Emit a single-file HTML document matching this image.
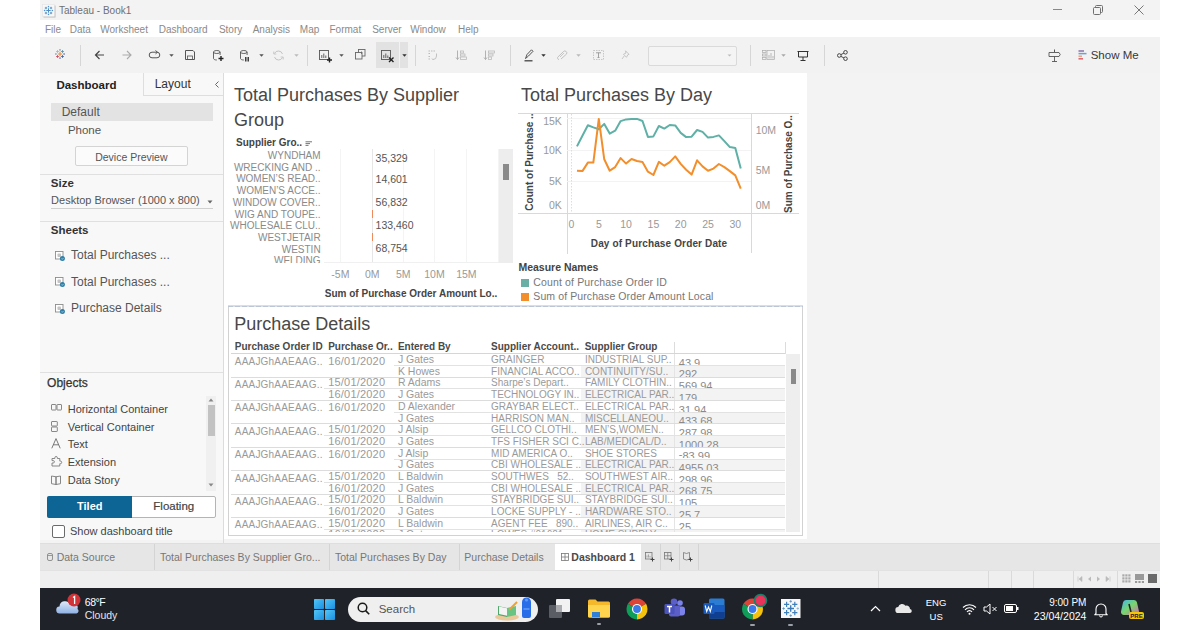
<!DOCTYPE html>
<html><head><meta charset="utf-8"><title>Tableau - Book1</title>
<style>
html,body{margin:0;padding:0;width:1200px;height:630px;overflow:hidden;background:#fff;}
body{position:relative;font-family:"Liberation Sans",sans-serif;}
.t{position:absolute;line-height:1;white-space:nowrap;}
.r{position:absolute;box-sizing:border-box;}
svg.r{overflow:visible;}
</style></head><body>
<div class="r" style="left:40px;top:0px;width:1120px;height:630px;background:#f3f3f3;"></div>
<div class="r" style="left:40px;top:0px;width:1120px;height:20px;background:#f3f3f3;"></div>
<svg class="r" style="left:42px;top:4px;" width="14" height="14" viewBox="0 0 14 14"><rect x="1.5" y="1.5" width="12" height="12" fill="#9a9a9a" opacity="0.6"/><rect x="0.5" y="0.5" width="12" height="12" fill="#f7f7f7" stroke="#e0e0e0" stroke-width="0.5"/><path d="M4.3 6.5h4.4M6.5 4.3v4.4" stroke="#4a8cc4" stroke-width="1"/><path d="M2.8 4h2.4M4 2.8v2.4" stroke="#4a8cc4" stroke-width="0.9"/><path d="M7.8 4h2.4M9 2.8v2.4" stroke="#4a8cc4" stroke-width="0.9"/><path d="M2.8 9h2.4M4 7.8v2.4" stroke="#4a8cc4" stroke-width="0.9"/><path d="M7.8 9h2.4M9 7.8v2.4" stroke="#4a8cc4" stroke-width="0.9"/><path d="M5.8 2.6h1.4M6.5 1.9000000000000001v1.4" stroke="#4a8cc4" stroke-width="0.8"/><path d="M5.8 10.4h1.4M6.5 9.700000000000001v1.4" stroke="#4a8cc4" stroke-width="0.8"/><path d="M1.9000000000000001 6.5h1.4M2.6 5.8v1.4" stroke="#4a8cc4" stroke-width="0.8"/><path d="M9.700000000000001 6.5h1.4M10.4 5.8v1.4" stroke="#4a8cc4" stroke-width="0.8"/></svg>
<div class="t" style="top:6.00px;font-size:10px;color:#707070;left:59.00px;">Tableau - Book1</div>
<div class="r" style="left:1052.5px;top:9px;width:9px;height:1px;background:#888;"></div>
<svg class="r" style="left:1092px;top:4px;" width="12" height="12" viewBox="0 0 12 12"><rect x="1.5" y="3.5" width="7" height="7" rx="1" fill="none" stroke="#707070"/><path d="M3.5 3.5V2.5a1 1 0 0 1 1-1h5a1 1 0 0 1 1 1v5a1 1 0 0 1-1 1h-1" fill="none" stroke="#707070"/></svg>
<svg class="r" style="left:1134px;top:5px;" width="10" height="10" viewBox="0 0 10 10"><path d="M0.5 0.5L9.5 9.5M9.5 0.5L0.5 9.5" stroke="#6a6a6a" stroke-width="0.9"/></svg>
<div class="r" style="left:40px;top:20px;width:1120px;height:17px;background:#ffffff;"></div>
<div class="t" style="top:25.00px;font-size:10px;color:#8a8a8a;left:45.00px;">File</div>
<div class="t" style="top:25.00px;font-size:10px;color:#8a8a8a;left:69.70px;">Data</div>
<div class="t" style="top:25.00px;font-size:10px;color:#8a8a8a;left:100.30px;">Worksheet</div>
<div class="t" style="top:25.00px;font-size:10px;color:#8a8a8a;left:158.70px;">Dashboard</div>
<div class="t" style="top:25.00px;font-size:10px;color:#8a8a8a;left:218.90px;">Story</div>
<div class="t" style="top:25.00px;font-size:10px;color:#8a8a8a;left:252.70px;">Analysis</div>
<div class="t" style="top:25.00px;font-size:10px;color:#8a8a8a;left:299.80px;">Map</div>
<div class="t" style="top:25.00px;font-size:10px;color:#8a8a8a;left:329.50px;">Format</div>
<div class="t" style="top:25.00px;font-size:10px;color:#8a8a8a;left:372.20px;">Server</div>
<div class="t" style="top:25.00px;font-size:10px;color:#8a8a8a;left:410.20px;">Window</div>
<div class="t" style="top:25.00px;font-size:10px;color:#8a8a8a;left:458.00px;">Help</div>
<div class="r" style="left:40px;top:37px;width:1120px;height:36px;background:#f2f2f2;"></div>
<svg class="r" style="left:55.1px;top:49.4px;" width="10" height="10" viewBox="0 0 10 10"><path d="M2.7 5h4.6M5 2.7v4.6" stroke="#ec8f3e" stroke-width="1.1"/><path d="M1.1 2.5h2.8M2.5 1.1v2.8" stroke="#f0a64a" stroke-width="0.9"/><path d="M6.1 2.5h2.8M7.5 1.1v2.8" stroke="#5e91a8" stroke-width="0.9"/><path d="M1.1 7.5h2.8M2.5 6.1v2.8" stroke="#d44a62" stroke-width="0.9"/><path d="M6.1 7.5h2.8M7.5 6.1v2.8" stroke="#3f67a6" stroke-width="0.9"/><path d="M4.2 0.9h1.6M5 0.09999999999999998v1.6" stroke="#7a9cb8" stroke-width="0.8"/><path d="M4.2 9.1h1.6M5 8.299999999999999v1.6" stroke="#6b7fb3" stroke-width="0.8"/><path d="M0.09999999999999998 5h1.6M0.9 4.2v1.6" stroke="#7aa0b5" stroke-width="0.8"/><path d="M8.299999999999999 5h1.6M9.1 4.2v1.6" stroke="#6d78b0" stroke-width="0.8"/></svg>
<div class="r" style="left:80px;top:45px;width:1px;height:21px;background:#d6d6d6;"></div>
<svg class="r" style="left:94px;top:50px;" width="11" height="10" viewBox="0 0 11 10"><path d="M10 5H1.5M5.5 1L1.5 5L5.5 9" fill="none" stroke="#444" stroke-width="1.2"/></svg>
<svg class="r" style="left:122px;top:50px;" width="11" height="10" viewBox="0 0 11 10"><path d="M0.5 5H9M5 1L9 5L5 9" fill="none" stroke="#aaa" stroke-width="1.1"/></svg>
<svg class="r" style="left:148px;top:50px;" width="13" height="9" viewBox="0 0 13 9"><path d="M4 2.2H9a2.8 2.8 0 0 1 0 5.6H4a2.8 2.8 0 0 1 0-5.6" fill="none" stroke="#555" stroke-width="1"/><path d="M7.5 0.5l2 1.7l-2 1.7" fill="none" stroke="#555" stroke-width="1"/></svg>
<svg class="r" style="left:169.0px;top:54px;" width="5" height="3" viewBox="0 0 5 3"><path d="M0.3 0.3h4.4l-2.2 2.5z" fill="#555"/></svg>
<svg class="r" style="left:185px;top:50px;" width="10" height="10" viewBox="0 0 10 10"><path d="M0.5 0.5h7.5l1.5 1.5v7.5h-9z" fill="none" stroke="#555"/><rect x="2.5" y="6" width="5" height="3.5" fill="none" stroke="#555" stroke-width="0.8"/></svg>
<svg class="r" style="left:213px;top:50px;" width="11" height="12" viewBox="0 0 11 12"><ellipse cx="3.8" cy="2" rx="3.3" ry="1.5" fill="none" stroke="#555" stroke-width="0.9"/><path d="M0.5 2v6.5c0 0.8 1.5 1.5 3.3 1.5M7.1 2v3" fill="none" stroke="#555" stroke-width="0.9"/><path d="M5.5 8.5h5M8 6v5" stroke="#222" stroke-width="1.4"/></svg>
<svg class="r" style="left:240px;top:50px;" width="10" height="12" viewBox="0 0 10 12"><ellipse cx="3.8" cy="2" rx="3.3" ry="1.5" fill="none" stroke="#555" stroke-width="0.9"/><path d="M0.5 2v6.5c0 0.8 1.5 1.5 3.3 1.5M7.1 2v3" fill="none" stroke="#555" stroke-width="0.9"/><path d="M5.8 7v4.5M8.2 7v4.5" stroke="#222" stroke-width="1.3"/></svg>
<svg class="r" style="left:259.2px;top:54px;" width="5" height="3" viewBox="0 0 5 3"><path d="M0.3 0.3h4.4l-2.2 2.5z" fill="#555"/></svg>
<svg class="r" style="left:273px;top:49.5px;" width="11" height="11" viewBox="0 0 11 11"><path d="M9.5 4A4.3 4.3 0 0 0 1.5 3.5M1.5 7A4.3 4.3 0 0 0 9.5 7.5" fill="none" stroke="#c4c4c4" stroke-width="1"/><path d="M0.8 1.5v2.5h2.5M10.2 9.5V7H7.7" fill="none" stroke="#c4c4c4" stroke-width="0.9"/></svg>
<svg class="r" style="left:293.8px;top:54px;" width="5" height="3" viewBox="0 0 5 3"><path d="M0.3 0.3h4.4l-2.2 2.5z" fill="#bbb"/></svg>
<div class="r" style="left:306.5px;top:45px;width:1px;height:21px;background:#d6d6d6;"></div>
<svg class="r" style="left:319px;top:49.5px;" width="14" height="13" viewBox="0 0 14 13"><rect x="0.5" y="0.5" width="9" height="9" fill="none" stroke="#555" stroke-width="0.9"/><path d="M2.8 8V5M4.8 8V3.5M6.8 8V5.5" stroke="#555" stroke-width="0.9"/><path d="M8 10h5M10.5 7.5v5" stroke="#222" stroke-width="1.4"/></svg>
<svg class="r" style="left:339.2px;top:54px;" width="5" height="3" viewBox="0 0 5 3"><path d="M0.3 0.3h4.4l-2.2 2.5z" fill="#555"/></svg>
<svg class="r" style="left:355px;top:49px;" width="11" height="11" viewBox="0 0 11 11"><rect x="3.5" y="0.5" width="6.5" height="6.5" fill="#f2f2f2" stroke="#666" stroke-width="0.9"/><rect x="0.5" y="3.5" width="6.5" height="6.5" fill="#f2f2f2" stroke="#666" stroke-width="0.9"/><path d="M6.5 5V2.5" stroke="#666" stroke-width="0.8"/></svg>
<div class="r" style="left:375.5px;top:42px;width:23px;height:26px;background:#e2e2e2;"></div>
<div class="r" style="left:400px;top:42px;width:8px;height:26px;background:#e2e2e2;"></div>
<svg class="r" style="left:381px;top:49.5px;" width="14" height="13" viewBox="0 0 14 13"><rect x="0.5" y="0.5" width="9" height="9" fill="none" stroke="#555" stroke-width="0.9"/><path d="M2.8 8V5M4.8 8V3.5M6.8 8V5.5" stroke="#555" stroke-width="0.9"/><path d="M8 7.5l4.5 4.5M12.5 7.5L8 12" stroke="#222" stroke-width="1.4"/></svg>
<svg class="r" style="left:401.7px;top:54px;" width="5" height="3" viewBox="0 0 5 3"><path d="M0.3 0.3h4.4l-2.2 2.5z" fill="#333"/></svg>
<div class="r" style="left:414.5px;top:45px;width:1px;height:21px;background:#d6d6d6;"></div>
<svg class="r" style="left:428px;top:50px;" width="10" height="11" viewBox="0 0 10 11"><path d="M0.5 1h1.5M3 1h1.5M5.5 1h1.5M0.5 3.5h1.5M0.5 6.5h1.5M0.5 9h1.5" stroke="#bbb" stroke-width="1"/><path d="M8.5 3.5v2.5a3.5 3.5 0 0 1-3.5 3.5M4 8.5l1.2 1.5" fill="none" stroke="#bbb" stroke-width="0.9"/></svg>
<svg class="r" style="left:456px;top:50px;" width="11" height="11" viewBox="0 0 11 11"><path d="M1.5 0.5v9M0 7.5l1.5 2l1.5-2" fill="none" stroke="#aaa" stroke-width="0.9"/><rect x="4.5" y="1" width="3" height="2" fill="none" stroke="#bbb" stroke-width="0.8"/><rect x="4.5" y="4" width="4.5" height="2" fill="none" stroke="#bbb" stroke-width="0.8"/><rect x="4.5" y="7" width="6" height="2.5" fill="none" stroke="#bbb" stroke-width="0.8"/></svg>
<svg class="r" style="left:484px;top:50px;" width="11" height="11" viewBox="0 0 11 11"><path d="M1.5 0.5v9M0 7.5l1.5 2l1.5-2" fill="none" stroke="#aaa" stroke-width="0.9"/><rect x="4.5" y="1" width="6" height="2" fill="none" stroke="#bbb" stroke-width="0.8"/><rect x="4.5" y="4" width="4.5" height="2" fill="none" stroke="#bbb" stroke-width="0.8"/><rect x="4.5" y="7" width="3" height="2.5" fill="none" stroke="#bbb" stroke-width="0.8"/></svg>
<div class="r" style="left:509.5px;top:45px;width:1px;height:21px;background:#d6d6d6;"></div>
<svg class="r" style="left:524px;top:49px;" width="10" height="13" viewBox="0 0 10 13"><path d="M1.5 9.5L3 5.5L7.5 0.8L9 2.3L4.5 7z" fill="none" stroke="#444" stroke-width="0.9"/><path d="M0.5 11.8h8" stroke="#444" stroke-width="1.3"/></svg>
<svg class="r" style="left:540.8px;top:54px;" width="5" height="3" viewBox="0 0 5 3"><path d="M0.3 0.3h4.4l-2.2 2.5z" fill="#333"/></svg>
<svg class="r" style="left:557px;top:49.5px;" width="10" height="11" viewBox="0 0 10 11"><path d="M2 9.5a1.5 1.5 0 0 1-1-2.6L6.5 1.5a2 2 0 0 1 3 2.6L4 9" fill="none" stroke="#bbb" stroke-width="0.9"/><path d="M3 7l4-4" stroke="#bbb" stroke-width="0.8"/></svg>
<svg class="r" style="left:576.2px;top:54px;" width="5" height="3" viewBox="0 0 5 3"><path d="M0.3 0.3h4.4l-2.2 2.5z" fill="#bbb"/></svg>
<svg class="r" style="left:593px;top:49.5px;" width="11" height="10" viewBox="0 0 11 10"><rect x="0.5" y="0.5" width="10" height="9" fill="none" stroke="#bbb" stroke-width="0.8" stroke-dasharray="1.5 1"/><path d="M3 2.8h5M5.5 2.8v4.7M4.5 7.5h2" stroke="#999" stroke-width="0.9"/></svg>
<svg class="r" style="left:621px;top:50px;" width="9" height="10" viewBox="0 0 9 10"><path d="M4.5 0.8l3.5 3.5l-1.2 0.5l-1.3 2.5l-3-3l2.5-1.3z" fill="none" stroke="#bbb" stroke-width="0.8"/><path d="M3.2 6L1 9" stroke="#bbb" stroke-width="0.8"/></svg>
<div class="r" style="left:648px;top:45.5px;width:89px;height:20px;background:#f4f4f4;border:1px solid #dadada;border-radius:2px;"></div>
<svg class="r" style="left:726.5px;top:54px;" width="5" height="3" viewBox="0 0 5 3"><path d="M0.5 0.5h4l-2 2z" fill="#bbb"/></svg>
<div class="r" style="left:749.5px;top:45px;width:1px;height:21px;background:#d6d6d6;"></div>
<svg class="r" style="left:762px;top:50px;" width="13" height="10" viewBox="0 0 13 10"><rect x="0.5" y="0.5" width="3.5" height="2" fill="none" stroke="#aaa" stroke-width="0.7"/><rect x="0.5" y="4" width="3.5" height="2" fill="none" stroke="#aaa" stroke-width="0.7"/><rect x="0.5" y="7.5" width="3.5" height="2" fill="none" stroke="#aaa" stroke-width="0.7"/><rect x="5" y="0.5" width="7.5" height="9" fill="none" stroke="#aaa" stroke-width="0.7"/><path d="M7 8.5V5M9 8.5V3M11 8.5V6" stroke="#aaa" stroke-width="0.8"/></svg>
<svg class="r" style="left:781.0px;top:54px;" width="5" height="3" viewBox="0 0 5 3"><path d="M0.3 0.3h4.4l-2.2 2.5z" fill="#aaa"/></svg>
<svg class="r" style="left:797px;top:49.5px;" width="12" height="12" viewBox="0 0 12 12"><path d="M0.5 1.5h11M1.5 1.5v5.5h9V1.5M6 7v3M3.5 10.5h5" fill="none" stroke="#333" stroke-width="1"/></svg>
<div class="r" style="left:823.5px;top:45px;width:1px;height:21px;background:#d6d6d6;"></div>
<svg class="r" style="left:837px;top:49.5px;" width="11" height="11" viewBox="0 0 11 11"><circle cx="2.3" cy="5.5" r="1.8" fill="none" stroke="#333" stroke-width="0.9"/><circle cx="8.5" cy="2.3" r="1.8" fill="none" stroke="#333" stroke-width="0.9"/><circle cx="8.5" cy="8.7" r="1.8" fill="none" stroke="#333" stroke-width="0.9"/><path d="M3.9 4.6l3-1.5M3.9 6.4l3 1.5" stroke="#333" stroke-width="0.9"/></svg>
<svg class="r" style="left:1048px;top:49px;" width="13" height="13" viewBox="0 0 13 13"><path d="M6.5 0.5v2.5" stroke="#555"/><path d="M1 3.5h10l1.2 2l-1.2 2H1z" fill="none" stroke="#555" stroke-width="0.9"/><path d="M6.5 7.5v5M4 12.5h5" stroke="#555" stroke-width="0.9"/></svg>
<svg class="r" style="left:1078px;top:50px;" width="9" height="10" viewBox="0 0 9 10"><path d="M0.5 1h5.5" stroke="#8870a8" stroke-width="1.5"/><path d="M0.5 3.6h8" stroke="#6f9fd4" stroke-width="1.5"/><path d="M0.5 6.2h3.5" stroke="#f0a078" stroke-width="1.5"/><path d="M0.5 8.8h4.5" stroke="#e05f6c" stroke-width="1.5"/></svg>
<div class="t" style="top:50.00px;font-size:11.5px;color:#383838;left:1090.70px;">Show Me</div>
<div class="r" style="left:40px;top:73px;width:1120px;height:471px;background:#f3f3f3;"></div>
<div class="r" style="left:40px;top:73px;width:183px;height:470px;background:#f8f8f8;"></div>
<div class="r" style="left:223px;top:73px;width:1px;height:470px;background:#dcdcdc;"></div>
<div class="r" style="left:143px;top:73px;width:80px;height:23px;background:#f8f8f8;border-left:1px solid #dedede;border-bottom:1px solid #dedede;"></div>
<div class="t" style="top:80.00px;font-size:11.5px;color:#222;font-weight:bold;left:56.40px;">Dashboard</div>
<div class="t" style="top:78.00px;font-size:12px;color:#333;left:154.70px;">Layout</div>
<svg class="r" style="left:213px;top:80px;" width="8" height="9" viewBox="0 0 8 9"><path d="M5.5 1.5L2.5 4.5L5.5 7.5" fill="none" stroke="#666" stroke-width="1"/></svg>
<div class="r" style="left:51px;top:103px;width:162px;height:18px;background:#e3e3e3;"></div>
<div class="t" style="top:106.00px;font-size:12px;color:#555;left:61.70px;">Default</div>
<div class="t" style="top:125.00px;font-size:11.5px;color:#555;left:67.90px;">Phone</div>
<div class="r" style="left:75px;top:146px;width:113px;height:20px;background:#fbfbfb;border:1px solid #d4d4d4;border-radius:2px;"></div>
<div class="t" style="top:152.00px;font-size:10.5px;color:#555;left:95.20px;">Device Preview</div>
<div class="r" style="left:40px;top:174px;width:183px;height:1px;background:#e0e0e0;"></div>
<div class="t" style="top:178.00px;font-size:11.5px;color:#333;font-weight:bold;left:50.80px;">Size</div>
<div class="t" style="top:195.00px;font-size:11px;color:#555;left:51.10px;">Desktop Browser (1000 x 800)</div>
<svg class="r" style="left:207px;top:200px;" width="6" height="4" viewBox="0 0 6 4"><path d="M0.5 0.5h5l-2.5 3z" fill="#666"/></svg>
<div class="r" style="left:51px;top:208px;width:162px;height:1px;background:#d0d0d0;"></div>
<div class="r" style="left:40px;top:221px;width:183px;height:1px;background:#e0e0e0;"></div>
<div class="t" style="top:225.00px;font-size:11.5px;color:#333;font-weight:bold;left:50.80px;">Sheets</div>
<svg class="r" style="left:54.8px;top:250.5px;" width="11" height="11" viewBox="0 0 11 11"><rect x="0.5" y="0.5" width="7.5" height="7.5" fill="#fff" stroke="#8d8d8d" stroke-width="0.9"/><rect x="2.5" y="2.5" width="3.5" height="3.5" rx="0.8" fill="#c4c4c4"/><circle cx="7.4" cy="7.4" r="2.5" fill="#2f7fa8"/><path d="M6.6 7.6l0.7 0.7l1.1-1.2" stroke="#fff" stroke-width="0.6" fill="none"/></svg>
<div class="t" style="top:249.00px;font-size:12px;color:#555;left:71.00px;">Total Purchases ...</div>
<svg class="r" style="left:54.8px;top:277.2px;" width="11" height="11" viewBox="0 0 11 11"><rect x="0.5" y="0.5" width="7.5" height="7.5" fill="#fff" stroke="#8d8d8d" stroke-width="0.9"/><rect x="2.5" y="2.5" width="3.5" height="3.5" rx="0.8" fill="#c4c4c4"/><circle cx="7.4" cy="7.4" r="2.5" fill="#2f7fa8"/><path d="M6.6 7.6l0.7 0.7l1.1-1.2" stroke="#fff" stroke-width="0.6" fill="none"/></svg>
<div class="t" style="top:276.00px;font-size:12px;color:#555;left:71.00px;">Total Purchases ...</div>
<svg class="r" style="left:54.8px;top:303.9px;" width="11" height="11" viewBox="0 0 11 11"><rect x="0.5" y="0.5" width="7.5" height="7.5" fill="#fff" stroke="#8d8d8d" stroke-width="0.9"/><rect x="2.5" y="2.5" width="3.5" height="3.5" rx="0.8" fill="#c4c4c4"/><circle cx="7.4" cy="7.4" r="2.5" fill="#2f7fa8"/><path d="M6.6 7.6l0.7 0.7l1.1-1.2" stroke="#fff" stroke-width="0.6" fill="none"/></svg>
<div class="t" style="top:302.00px;font-size:12px;color:#555;left:71.00px;">Purchase Details</div>
<div class="r" style="left:40px;top:372px;width:183px;height:1px;background:#e0e0e0;"></div>
<div class="t" style="top:377.00px;font-size:12px;color:#333;left:47.10px;-webkit-text-stroke:0.25px #333;">Objects</div>
<svg class="r" style="left:50.5px;top:403.3px;" width="12" height="12" viewBox="0 0 12 12"><rect x="0.5" y="1.5" width="4.5" height="5.5" rx="0.5" fill="none" stroke="#7a7a7a" stroke-width="0.9"/><rect x="6" y="1.5" width="4.5" height="5.5" rx="0.5" fill="none" stroke="#7a7a7a" stroke-width="0.9"/></svg>
<div class="t" style="top:404.00px;font-size:11px;color:#444;left:67.70px;">Horizontal Container</div>
<svg class="r" style="left:50.5px;top:420.9px;" width="12" height="12" viewBox="0 0 12 12"><rect x="0.5" y="0.5" width="5.8" height="4.5" rx="0.5" fill="none" stroke="#7a7a7a" stroke-width="0.9"/><rect x="0.5" y="6" width="5.8" height="4.5" rx="0.5" fill="none" stroke="#7a7a7a" stroke-width="0.9"/></svg>
<div class="t" style="top:422.00px;font-size:11px;color:#444;left:67.70px;">Vertical Container</div>
<svg class="r" style="left:50.5px;top:438.4px;" width="12" height="12" viewBox="0 0 12 12"><path d="M0.8 10.3L5 0.6L9.2 10.3M2.4 6.8h5.2" fill="none" stroke="#6a6a6a" stroke-width="0.9"/></svg>
<div class="t" style="top:439.00px;font-size:11px;color:#444;left:67.70px;">Text</div>
<svg class="r" style="left:50.5px;top:455.9px;" width="12" height="12" viewBox="0 0 12 12"><path d="M1 10V7h1.2a1.2 1.2 0 0 0 0-2.4H1V2.5h2.8V1.8a1.3 1.3 0 0 1 2.6 0v0.7h2.4v2.6h0.6a1.3 1.3 0 0 1 0 2.6h-0.6V10z" fill="none" stroke="#7a7a7a" stroke-width="0.9"/></svg>
<div class="t" style="top:457.00px;font-size:11px;color:#444;left:67.70px;">Extension</div>
<svg class="r" style="left:50.5px;top:473.6px;" width="12" height="12" viewBox="0 0 12 12"><path d="M0.5 2l4.5 0.8v7.7l-4.5-0.8zM9.5 2l-4.5 0.8v7.7l4.5-0.8z" fill="none" stroke="#7a7a7a" stroke-width="0.9"/></svg>
<div class="t" style="top:475.00px;font-size:11px;color:#444;left:67.70px;">Data Story</div>
<div class="r" style="left:206px;top:396px;width:10px;height:95px;background:#f0f0f0;"></div>
<div class="r" style="left:207.5px;top:405px;width:7.5px;height:31px;background:#c2c2c2;"></div>
<svg class="r" style="left:208px;top:398px;" width="6" height="4" viewBox="0 0 6 4"><path d="M0.5 3.5h5l-2.5-3z" fill="#888"/></svg>
<svg class="r" style="left:208px;top:483px;" width="6" height="4" viewBox="0 0 6 4"><path d="M0.5 0.5h5l-2.5 3z" fill="#888"/></svg>
<div class="r" style="left:47px;top:496px;width:169px;height:22px;background:#ffffff;border:1px solid #b4b4b4;border-radius:2px;"></div>
<div class="r" style="left:47px;top:496px;width:85px;height:22px;background:#0c6594;border-radius:2px 0 0 2px;"></div>
<div class="t" style="top:501.00px;font-size:11px;color:#ffffff;font-weight:bold;left:77.00px;">Tiled</div>
<div class="t" style="top:501.00px;font-size:11.5px;color:#444;left:153.30px;-webkit-text-stroke:0.2px #444;">Floating</div>
<div class="r" style="left:52px;top:525px;width:13px;height:13px;background:#ffffff;border:1px solid #6b6b6b;border-radius:2px;"></div>
<div class="t" style="top:526.00px;font-size:11px;color:#444;left:70.00px;">Show dashboard title</div>
<div class="r" style="left:40px;top:540px;width:183px;height:3px;background:#f3f3f3;"></div>
<div class="r" style="left:224px;top:73px;width:583px;height:470px;background:#ffffff;"></div>
<div class="t" style="top:86.00px;font-size:18px;color:#484848;left:234.00px;">Total Purchases By Supplier</div>
<div class="t" style="top:111.00px;font-size:18px;color:#484848;left:234.00px;">Group</div>
<div class="t" style="top:138.00px;font-size:10px;color:#444;font-weight:bold;left:236.00px;">Supplier Gro..</div>
<svg class="r" style="left:305px;top:141px;" width="8" height="6" viewBox="0 0 8 6"><path d="M0.5 0.8h6.5M0.5 2.6h4.5M0.5 4.4h3" stroke="#666" stroke-width="0.9"/></svg>
<div class="t" style="top:151.00px;font-size:10px;color:#8a8a8a;right:879.40px;text-align:right;">WYNDHAM</div>
<div class="t" style="top:163.00px;font-size:10px;color:#8a8a8a;right:879.40px;text-align:right;">WRECKING AND ..</div>
<div class="t" style="top:174.00px;font-size:10px;color:#8a8a8a;right:879.40px;text-align:right;">WOMEN’S READ..</div>
<div class="t" style="top:186.00px;font-size:10px;color:#8a8a8a;right:879.40px;text-align:right;">WOMEN’S ACCE..</div>
<div class="t" style="top:198.00px;font-size:10px;color:#8a8a8a;right:879.40px;text-align:right;">WINDOW COVER..</div>
<div class="t" style="top:210.00px;font-size:10px;color:#8a8a8a;right:879.40px;text-align:right;">WIG AND TOUPE..</div>
<div class="t" style="top:221.00px;font-size:10px;color:#8a8a8a;right:879.40px;text-align:right;">WHOLESALE CLU..</div>
<div class="t" style="top:233.00px;font-size:10px;color:#8a8a8a;right:879.40px;text-align:right;">WESTJETAIR</div>
<div class="t" style="top:245.00px;font-size:10px;color:#8a8a8a;right:879.40px;text-align:right;">WESTIN</div>
<div class="t" style="top:256.00px;font-size:10px;color:#8a8a8a;right:879.40px;text-align:right;">WELDING</div>
<div class="r" style="left:224px;top:262.5px;width:99px;height:5px;background:#ffffff;"></div>
<div class="r" style="left:340px;top:149px;width:1px;height:113.5px;background:#f4f4f4;"></div>
<div class="r" style="left:403px;top:149px;width:1px;height:113.5px;background:#f4f4f4;"></div>
<div class="r" style="left:434px;top:149px;width:1px;height:113.5px;background:#f4f4f4;"></div>
<div class="r" style="left:466px;top:149px;width:1px;height:113.5px;background:#f4f4f4;"></div>
<div class="r" style="left:498px;top:149px;width:1px;height:113.5px;background:#f4f4f4;"></div>
<div class="r" style="left:372px;top:149px;width:1px;height:113.5px;background:#e6e6e6;"></div>
<div class="r" style="left:324px;top:262px;width:175px;height:1px;background:#f0f0f0;"></div>
<div class="r" style="left:371.5px;top:209.5px;width:1.5px;height:8.5px;background:#f08a5d;"></div>
<div class="r" style="left:371.5px;top:233.3px;width:1.5px;height:8px;background:#f08a5d;"></div>
<div class="t" style="top:153.00px;font-size:10.5px;color:#555;left:375.60px;">35,329</div>
<div class="t" style="top:174.00px;font-size:10.5px;color:#555;left:375.60px;">14,601</div>
<div class="t" style="top:197.00px;font-size:10.5px;color:#555;left:375.60px;">56,832</div>
<div class="t" style="top:220.00px;font-size:10.5px;color:#555;left:375.60px;">133,460</div>
<div class="t" style="top:243.00px;font-size:10.5px;color:#555;left:375.60px;">68,754</div>
<div class="r" style="left:499px;top:149px;width:14px;height:113.5px;background:#ededed;"></div>
<div class="r" style="left:503px;top:164.4px;width:6px;height:15.3px;background:#8a8a8a;"></div>
<div class="t" style="top:269.00px;font-size:10.5px;color:#999;left:40.40px;width:600px;text-align:center;">-5M</div>
<div class="t" style="top:269.00px;font-size:10.5px;color:#999;left:72.20px;width:600px;text-align:center;">0M</div>
<div class="t" style="top:269.00px;font-size:10.5px;color:#999;left:103.30px;width:600px;text-align:center;">5M</div>
<div class="t" style="top:269.00px;font-size:10.5px;color:#999;left:134.50px;width:600px;text-align:center;">10M</div>
<div class="t" style="top:269.00px;font-size:10.5px;color:#999;left:166.40px;width:600px;text-align:center;">15M</div>
<div class="t" style="top:289.00px;font-size:10px;color:#444;font-weight:bold;left:324.80px;">Sum of Purchase Order Amount Lo..</div>
<div class="t" style="top:86.00px;font-size:18px;color:#484848;left:520.90px;">Total Purchases By Day</div>
<div class="r" style="left:517.5px;top:113px;width:281px;height:1px;background:#d9d9d9;"></div>
<div class="r" style="left:517.5px;top:212.5px;width:281px;height:1px;background:#d9d9d9;"></div>
<div class="r" style="left:566.5px;top:113px;width:1px;height:141px;background:#d9d9d9;"></div>
<div class="r" style="left:751px;top:113px;width:1px;height:140px;background:#d9d9d9;"></div>
<div class="r" style="left:567px;top:118px;width:184px;height:1px;background:#f3f3f3;"></div>
<div class="r" style="left:567px;top:150px;width:184px;height:1px;background:#f3f3f3;"></div>
<div class="r" style="left:567px;top:181px;width:184px;height:1px;background:#f3f3f3;"></div>
<svg class="r" style="left:571px;top:114px;" width="1" height="99" viewBox="0 0 1 99"><path d="M0.5 0v99" stroke="#dddddd" stroke-width="1" stroke-dasharray="1.5 1.5"/></svg>
<div class="t" style="top:116.00px;font-size:10.5px;color:#999;right:638.20px;text-align:right;">15K</div>
<div class="t" style="top:145.00px;font-size:10.5px;color:#999;right:638.20px;text-align:right;">10K</div>
<div class="t" style="top:176.00px;font-size:10.5px;color:#999;right:638.20px;text-align:right;">5K</div>
<div class="t" style="top:200.00px;font-size:10.5px;color:#999;right:638.20px;text-align:right;">0K</div>
<div class="t" style="top:125.00px;font-size:10.5px;color:#999;left:755.70px;">10M</div>
<div class="t" style="top:165.00px;font-size:10.5px;color:#999;left:755.70px;">5M</div>
<div class="t" style="top:200.00px;font-size:10.5px;color:#999;left:755.70px;">0M</div>
<div class="t" style="left:480.4px;top:156.7px;width:100px;font-size:10px;font-weight:bold;color:#444;text-align:center;transform:rotate(-90deg);">Count of Purchase ..</div>
<div class="t" style="left:739px;top:159px;width:100px;font-size:10px;font-weight:bold;color:#444;text-align:center;transform:rotate(-90deg);">Sum of Purchase O..</div>
<div class="t" style="top:219.00px;font-size:10.5px;color:#999;left:271.50px;width:600px;text-align:center;">0</div>
<div class="t" style="top:219.00px;font-size:10.5px;color:#999;left:298.80px;width:600px;text-align:center;">5</div>
<div class="t" style="top:219.00px;font-size:10.5px;color:#999;left:326.10px;width:600px;text-align:center;">10</div>
<div class="t" style="top:219.00px;font-size:10.5px;color:#999;left:353.40px;width:600px;text-align:center;">15</div>
<div class="t" style="top:219.00px;font-size:10.5px;color:#999;left:380.70px;width:600px;text-align:center;">20</div>
<div class="t" style="top:219.00px;font-size:10.5px;color:#999;left:408.00px;width:600px;text-align:center;">25</div>
<div class="t" style="top:219.00px;font-size:10.5px;color:#999;left:435.30px;width:600px;text-align:center;">30</div>
<div class="t" style="top:239.00px;font-size:10px;color:#444;font-weight:bold;letter-spacing:0.14px;left:590.80px;">Day of Purchase Order Date</div>
<svg class="r" style="left:560px;top:110px;" width="200" height="90" viewBox="0 0 200 90"><polyline points="16.96,36.40 22.42,25.70 27.88,15.30 33.34,17.40 38.80,19.30 44.26,13.90 49.72,23.60 55.18,20.70 60.64,11.10 66.10,9.40 71.56,9.00 77.02,8.90 82.48,11.00 87.94,26.90 93.40,26.40 98.86,16.00 104.32,18.60 109.78,15.00 115.24,15.40 120.70,22.90 126.16,27.10 131.62,26.70 137.08,20.00 142.54,21.90 148.00,27.60 153.46,26.90 158.92,25.40 164.38,31.10 169.84,37.10 175.30,37.90 180.76,58.60" fill="none" stroke="#5fb0a6" stroke-width="2" stroke-linejoin="round"/><polyline points="16.96,60.70 22.42,61.10 27.88,52.60 33.34,52.60 38.80,8.90 44.26,49.30 49.72,60.70 55.18,57.10 60.64,48.10 66.10,53.60 71.56,49.00 77.02,51.00 82.48,51.90 87.94,61.70 93.40,65.00 98.86,51.90 104.32,55.70 109.78,52.10 115.24,46.40 120.70,53.90 126.16,59.70 131.62,64.60 137.08,50.30 142.54,56.40 148.00,60.70 153.46,58.60 158.92,54.00 164.38,57.10 169.84,61.10 175.30,65.40 180.76,78.60" fill="none" stroke="#f28e2b" stroke-width="2" stroke-linejoin="round"/></svg>
<div class="t" style="top:262.00px;font-size:10.5px;color:#444;font-weight:bold;left:518.40px;">Measure Names</div>
<div class="r" style="left:521px;top:278.5px;width:8px;height:8px;background:#6aafa6;"></div>
<div class="r" style="left:521px;top:292.5px;width:8px;height:8px;background:#f28e2b;"></div>
<div class="t" style="top:277.00px;font-size:10.5px;color:#777;letter-spacing:0.14px;left:533.30px;">Count of Purchase Order ID</div>
<div class="t" style="top:291.00px;font-size:10.5px;color:#777;letter-spacing:0.1px;left:533.30px;">Sum of Purchase Order Amount Local</div>
<div class="r" style="left:227.5px;top:305.5px;width:575.5px;height:230px;background:#ffffff;border:1px solid #d2d2d2;border-top:none;"></div>
<svg class="r" style="left:227.5px;top:305px;" width="575" height="2" viewBox="0 0 575 2"><path d="M0 1h575" stroke="#d9dfe8" stroke-width="2"/><path d="M0 1.5h575" stroke="#bcc6d4" stroke-width="1" stroke-dasharray="5 2"/></svg>
<div class="t" style="top:315.00px;font-size:18px;color:#484848;left:234.20px;">Purchase Details</div>
<div class="t" style="top:342.00px;font-size:10px;color:#4a4a4a;font-weight:bold;left:234.80px;">Purchase Order ID</div>
<div class="t" style="top:342.00px;font-size:10px;color:#4a4a4a;font-weight:bold;left:328.20px;">Purchase Or..</div>
<div class="t" style="top:342.00px;font-size:10px;color:#4a4a4a;font-weight:bold;left:397.90px;">Entered By</div>
<div class="t" style="top:342.00px;font-size:10px;color:#4a4a4a;font-weight:bold;left:491.10px;">Supplier Account..</div>
<div class="t" style="top:342.00px;font-size:10px;color:#4a4a4a;font-weight:bold;left:584.70px;">Supplier Group</div>
<div class="r" style="left:674px;top:342px;width:1px;height:11.5px;background:#dcdcdc;"></div>
<div class="r" style="left:785px;top:342px;width:1px;height:11.5px;background:#dcdcdc;"></div>
<div class="r" style="left:581px;top:364.9px;width:204px;height:11.7px;background:#f3f3f3;"></div>
<div class="r" style="left:581px;top:388.29999999999995px;width:204px;height:11.7px;background:#f3f3f3;"></div>
<div class="r" style="left:581px;top:411.7px;width:204px;height:11.7px;background:#f3f3f3;"></div>
<div class="r" style="left:581px;top:435.09999999999997px;width:204px;height:11.7px;background:#f3f3f3;"></div>
<div class="r" style="left:581px;top:458.5px;width:204px;height:11.7px;background:#f3f3f3;"></div>
<div class="r" style="left:581px;top:481.9px;width:204px;height:11.7px;background:#f3f3f3;"></div>
<div class="r" style="left:581px;top:505.29999999999995px;width:204px;height:11.7px;background:#f3f3f3;"></div>
<div class="r" style="left:581px;top:528.7px;width:204px;height:11.7px;background:#f3f3f3;"></div>
<div class="r" style="left:674px;top:353.5px;width:1px;height:179px;background:#e4e4e4;"></div>
<div class="r" style="left:231px;top:353.2px;width:554px;height:1px;background:#d6d6d6;"></div>
<div class="r" style="left:231px;top:376.59999999999997px;width:554px;height:1px;background:#dcdcdc;"></div>
<div class="r" style="left:394px;top:364.9px;width:391px;height:1px;background:#e2e2e2;"></div>
<div class="t" style="top:357.00px;font-size:10px;color:#9a9a9a;letter-spacing:0.2px;left:234.80px;">AAAJGhAAEAAG..</div>
<div class="t" style="top:356.00px;font-size:11px;color:#9a9a9a;letter-spacing:0.2px;left:328.20px;">16/01/2020</div>
<div class="t" style="top:354.00px;font-size:10.5px;color:#9a9a9a;left:397.90px;">J Gates</div>
<div class="t" style="top:366.00px;font-size:10.5px;color:#9a9a9a;left:397.90px;">K Howes</div>
<div class="r" style="left:231px;top:400.0px;width:554px;height:1px;background:#dcdcdc;"></div>
<div class="r" style="left:324px;top:388.29999999999995px;width:461px;height:1px;background:#e2e2e2;"></div>
<div class="t" style="top:380.00px;font-size:10px;color:#9a9a9a;letter-spacing:0.2px;left:234.80px;">AAAJGhAAEAAG..</div>
<div class="t" style="top:377.00px;font-size:11px;color:#9a9a9a;letter-spacing:0.2px;left:328.20px;">15/01/2020</div>
<div class="t" style="top:389.00px;font-size:11px;color:#9a9a9a;letter-spacing:0.2px;left:328.20px;">16/01/2020</div>
<div class="t" style="top:377.00px;font-size:10.5px;color:#9a9a9a;left:397.90px;">R Adams</div>
<div class="t" style="top:389.00px;font-size:10.5px;color:#9a9a9a;left:397.90px;">J Gates</div>
<div class="r" style="left:231px;top:423.4px;width:554px;height:1px;background:#dcdcdc;"></div>
<div class="r" style="left:394px;top:411.7px;width:391px;height:1px;background:#e2e2e2;"></div>
<div class="t" style="top:403.00px;font-size:10px;color:#9a9a9a;letter-spacing:0.2px;left:234.80px;">AAAJGhAAEAAG..</div>
<div class="t" style="top:402.00px;font-size:11px;color:#9a9a9a;letter-spacing:0.2px;left:328.20px;">16/01/2020</div>
<div class="t" style="top:401.00px;font-size:10.5px;color:#9a9a9a;left:397.90px;">D Alexander</div>
<div class="t" style="top:413.00px;font-size:10.5px;color:#9a9a9a;left:397.90px;">J Gates</div>
<div class="r" style="left:231px;top:446.79999999999995px;width:554px;height:1px;background:#dcdcdc;"></div>
<div class="r" style="left:324px;top:435.09999999999997px;width:461px;height:1px;background:#e2e2e2;"></div>
<div class="t" style="top:427.00px;font-size:10px;color:#9a9a9a;letter-spacing:0.2px;left:234.80px;">AAAJGhAAEAAG..</div>
<div class="t" style="top:424.00px;font-size:11px;color:#9a9a9a;letter-spacing:0.2px;left:328.20px;">15/01/2020</div>
<div class="t" style="top:436.00px;font-size:11px;color:#9a9a9a;letter-spacing:0.2px;left:328.20px;">16/01/2020</div>
<div class="t" style="top:424.00px;font-size:10.5px;color:#9a9a9a;left:397.90px;">J Alsip</div>
<div class="t" style="top:436.00px;font-size:10.5px;color:#9a9a9a;left:397.90px;">J Gates</div>
<div class="r" style="left:231px;top:470.2px;width:554px;height:1px;background:#dcdcdc;"></div>
<div class="r" style="left:394px;top:458.5px;width:391px;height:1px;background:#e2e2e2;"></div>
<div class="t" style="top:450.00px;font-size:10px;color:#9a9a9a;letter-spacing:0.2px;left:234.80px;">AAAJGhAAEAAG..</div>
<div class="t" style="top:449.00px;font-size:11px;color:#9a9a9a;letter-spacing:0.2px;left:328.20px;">16/01/2020</div>
<div class="t" style="top:448.00px;font-size:10.5px;color:#9a9a9a;left:397.90px;">J Alsip</div>
<div class="t" style="top:459.00px;font-size:10.5px;color:#9a9a9a;left:397.90px;">J Gates</div>
<div class="r" style="left:231px;top:493.59999999999997px;width:554px;height:1px;background:#dcdcdc;"></div>
<div class="r" style="left:324px;top:481.9px;width:461px;height:1px;background:#e2e2e2;"></div>
<div class="t" style="top:474.00px;font-size:10px;color:#9a9a9a;letter-spacing:0.2px;left:234.80px;">AAAJGhAAEAAG..</div>
<div class="t" style="top:471.00px;font-size:11px;color:#9a9a9a;letter-spacing:0.2px;left:328.20px;">15/01/2020</div>
<div class="t" style="top:483.00px;font-size:11px;color:#9a9a9a;letter-spacing:0.2px;left:328.20px;">16/01/2020</div>
<div class="t" style="top:471.00px;font-size:10.5px;color:#9a9a9a;left:397.90px;">L Baldwin</div>
<div class="t" style="top:483.00px;font-size:10.5px;color:#9a9a9a;left:397.90px;">J Gates</div>
<div class="r" style="left:231px;top:517.0px;width:554px;height:1px;background:#dcdcdc;"></div>
<div class="r" style="left:324px;top:505.29999999999995px;width:461px;height:1px;background:#e2e2e2;"></div>
<div class="t" style="top:497.00px;font-size:10px;color:#9a9a9a;letter-spacing:0.2px;left:234.80px;">AAAJGhAAEAAG..</div>
<div class="t" style="top:494.00px;font-size:11px;color:#9a9a9a;letter-spacing:0.2px;left:328.20px;">15/01/2020</div>
<div class="t" style="top:506.00px;font-size:11px;color:#9a9a9a;letter-spacing:0.2px;left:328.20px;">16/01/2020</div>
<div class="t" style="top:494.00px;font-size:10.5px;color:#9a9a9a;left:397.90px;">L Baldwin</div>
<div class="t" style="top:506.00px;font-size:10.5px;color:#9a9a9a;left:397.90px;">J Gates</div>
<div class="r" style="left:324px;top:528.7px;width:461px;height:1px;background:#e2e2e2;"></div>
<div class="t" style="top:520.00px;font-size:10px;color:#9a9a9a;letter-spacing:0.2px;left:234.80px;">AAAJGhAAEAAG..</div>
<div class="t" style="top:518.00px;font-size:11px;color:#9a9a9a;letter-spacing:0.2px;left:328.20px;">15/01/2020</div>
<div class="t" style="top:529.00px;font-size:11px;color:#9a9a9a;letter-spacing:0.2px;left:328.20px;">16/01/2020</div>
<div class="t" style="top:518.00px;font-size:10.5px;color:#9a9a9a;left:397.90px;">L Baldwin</div>
<div class="t" style="top:529.00px;font-size:10.5px;color:#9a9a9a;left:397.90px;">J Gates</div>
<div class="t" style="top:355.00px;font-size:10px;color:#9a9a9a;left:491.10px;white-space:pre;">GRAINGER</div>
<div class="t" style="top:355.00px;font-size:10px;color:#9a9a9a;left:584.90px;">INDUSTRIAL SUP..</div>
<div class="r" style="left:675px;top:354.20px;width:110px;height:10.70px;overflow:hidden;"><div class="t" style="left:3.8px;top:3.5px;font-size:11px;color:#8a8a8a;">43.9</div></div>
<div class="t" style="top:367.00px;font-size:10px;color:#9a9a9a;left:491.10px;white-space:pre;">FINANCIAL ACCO..</div>
<div class="t" style="top:367.00px;font-size:10px;color:#9a9a9a;left:584.90px;">CONTINUITY/SU..</div>
<div class="r" style="left:675px;top:365.90px;width:110px;height:10.70px;overflow:hidden;"><div class="t" style="left:3.8px;top:3.5px;font-size:11px;color:#8a8a8a;">292</div></div>
<div class="t" style="top:378.00px;font-size:10px;color:#9a9a9a;left:491.10px;white-space:pre;">Sharpe’s Depart..</div>
<div class="t" style="top:378.00px;font-size:10px;color:#9a9a9a;left:584.90px;">FAMILY CLOTHIN..</div>
<div class="r" style="left:675px;top:377.60px;width:110px;height:10.70px;overflow:hidden;"><div class="t" style="left:3.8px;top:3.5px;font-size:11px;color:#8a8a8a;">569.94</div></div>
<div class="t" style="top:390.00px;font-size:10px;color:#9a9a9a;left:491.10px;white-space:pre;">TECHNOLOGY IN..</div>
<div class="t" style="top:390.00px;font-size:10px;color:#9a9a9a;left:584.90px;">ELECTRICAL PAR..</div>
<div class="r" style="left:675px;top:389.30px;width:110px;height:10.70px;overflow:hidden;"><div class="t" style="left:3.8px;top:3.5px;font-size:11px;color:#8a8a8a;">179</div></div>
<div class="t" style="top:402.00px;font-size:10px;color:#9a9a9a;left:491.10px;white-space:pre;">GRAYBAR ELECT..</div>
<div class="t" style="top:402.00px;font-size:10px;color:#9a9a9a;left:584.90px;">ELECTRICAL PAR..</div>
<div class="r" style="left:675px;top:401.00px;width:110px;height:10.70px;overflow:hidden;"><div class="t" style="left:3.8px;top:3.5px;font-size:11px;color:#8a8a8a;">31.94</div></div>
<div class="t" style="top:414.00px;font-size:10px;color:#9a9a9a;left:491.10px;white-space:pre;">HARRISON MAN..</div>
<div class="t" style="top:414.00px;font-size:10px;color:#9a9a9a;left:584.90px;">MISCELLANEOU..</div>
<div class="r" style="left:675px;top:412.70px;width:110px;height:10.70px;overflow:hidden;"><div class="t" style="left:3.8px;top:3.5px;font-size:11px;color:#8a8a8a;">433.68</div></div>
<div class="t" style="top:425.00px;font-size:10px;color:#9a9a9a;left:491.10px;white-space:pre;">GELLCO CLOTHI..</div>
<div class="t" style="top:425.00px;font-size:10px;color:#9a9a9a;left:584.90px;">MEN’S,WOMEN..</div>
<div class="r" style="left:675px;top:424.40px;width:110px;height:10.70px;overflow:hidden;"><div class="t" style="left:3.8px;top:3.5px;font-size:11px;color:#8a8a8a;">287.98</div></div>
<div class="t" style="top:437.00px;font-size:10px;color:#9a9a9a;left:491.10px;white-space:pre;">TFS FISHER SCI C..</div>
<div class="t" style="top:437.00px;font-size:10px;color:#9a9a9a;left:584.90px;">LAB/MEDICAL/D..</div>
<div class="r" style="left:675px;top:436.10px;width:110px;height:10.70px;overflow:hidden;"><div class="t" style="left:3.8px;top:3.5px;font-size:11px;color:#8a8a8a;">1000.28</div></div>
<div class="t" style="top:449.00px;font-size:10px;color:#9a9a9a;left:491.10px;white-space:pre;">MID AMERICA O..</div>
<div class="t" style="top:449.00px;font-size:10px;color:#9a9a9a;left:584.90px;">SHOE STORES</div>
<div class="r" style="left:675px;top:447.80px;width:110px;height:10.70px;overflow:hidden;"><div class="t" style="left:3.8px;top:3.5px;font-size:11px;color:#8a8a8a;"><span style="position:relative;top:-2px">-</span>83.99</div></div>
<div class="t" style="top:460.00px;font-size:10px;color:#9a9a9a;left:491.10px;white-space:pre;">CBI WHOLESALE ..</div>
<div class="t" style="top:460.00px;font-size:10px;color:#9a9a9a;left:584.90px;">ELECTRICAL PAR..</div>
<div class="r" style="left:675px;top:459.50px;width:110px;height:10.70px;overflow:hidden;"><div class="t" style="left:3.8px;top:3.5px;font-size:11px;color:#8a8a8a;">4955.03</div></div>
<div class="t" style="top:472.00px;font-size:10px;color:#9a9a9a;left:491.10px;white-space:pre;">SOUTHWES   52..</div>
<div class="t" style="top:472.00px;font-size:10px;color:#9a9a9a;left:584.90px;">SOUTHWEST AIR..</div>
<div class="r" style="left:675px;top:471.20px;width:110px;height:10.70px;overflow:hidden;"><div class="t" style="left:3.8px;top:3.5px;font-size:11px;color:#8a8a8a;">298.96</div></div>
<div class="t" style="top:484.00px;font-size:10px;color:#9a9a9a;left:491.10px;white-space:pre;">CBI WHOLESALE ..</div>
<div class="t" style="top:484.00px;font-size:10px;color:#9a9a9a;left:584.90px;">ELECTRICAL PAR..</div>
<div class="r" style="left:675px;top:482.90px;width:110px;height:10.70px;overflow:hidden;"><div class="t" style="left:3.8px;top:3.5px;font-size:11px;color:#8a8a8a;">268.75</div></div>
<div class="t" style="top:495.00px;font-size:10px;color:#9a9a9a;left:491.10px;white-space:pre;">STAYBRIDGE SUI..</div>
<div class="t" style="top:495.00px;font-size:10px;color:#9a9a9a;left:584.90px;">STAYBRIDGE SUI..</div>
<div class="r" style="left:675px;top:494.60px;width:110px;height:10.70px;overflow:hidden;"><div class="t" style="left:3.8px;top:3.5px;font-size:11px;color:#8a8a8a;">105</div></div>
<div class="t" style="top:507.00px;font-size:10px;color:#9a9a9a;left:491.10px;white-space:pre;">LOCKE SUPPLY - ..</div>
<div class="t" style="top:507.00px;font-size:10px;color:#9a9a9a;left:584.90px;">HARDWARE STO..</div>
<div class="r" style="left:675px;top:506.30px;width:110px;height:10.70px;overflow:hidden;"><div class="t" style="left:3.8px;top:3.5px;font-size:11px;color:#8a8a8a;">25.7</div></div>
<div class="t" style="top:519.00px;font-size:10px;color:#9a9a9a;left:491.10px;white-space:pre;">AGENT FEE   890..</div>
<div class="t" style="top:519.00px;font-size:10px;color:#9a9a9a;left:584.90px;">AIRLINES, AIR C..</div>
<div class="r" style="left:675px;top:518.00px;width:110px;height:10.70px;overflow:hidden;"><div class="t" style="left:3.8px;top:3.5px;font-size:11px;color:#8a8a8a;">25</div></div>
<div class="t" style="top:530.00px;font-size:10px;color:#9a9a9a;left:491.10px;white-space:pre;">LOWES #01621</div>
<div class="t" style="top:530.00px;font-size:10px;color:#9a9a9a;left:584.90px;">HOME SUPPLY ..</div>
<div class="r" style="left:675px;top:529.70px;width:110px;height:10.70px;overflow:hidden;"><div class="t" style="left:3.8px;top:3.5px;font-size:11px;color:#8a8a8a;">31</div></div>
<div class="r" style="left:228.5px;top:532px;width:557px;height:3px;background:#ffffff;"></div>
<div class="r" style="left:227.5px;top:535px;width:575.5px;height:1px;background:#d2d2d2;"></div>
<div class="r" style="left:224px;top:536px;width:583px;height:3px;background:#ffffff;"></div>
<div class="r" style="left:224px;top:539px;width:583px;height:4px;background:#f3f3f3;"></div>
<div class="r" style="left:786px;top:353.5px;width:14px;height:178.5px;background:#eeeeee;"></div>
<div class="r" style="left:790.5px;top:368.6px;width:5.5px;height:15.5px;background:#8a8a8a;"></div>
<div class="r" style="left:40px;top:543px;width:1120px;height:27px;background:#e6e6e6;"></div>
<div class="r" style="left:40px;top:543px;width:1120px;height:1px;background:#dedede;"></div>
<div class="r" style="left:153.5px;top:544px;width:1px;height:26px;background:#d4d4d4;"></div>
<div class="r" style="left:329px;top:544px;width:1px;height:26px;background:#d4d4d4;"></div>
<div class="r" style="left:458.5px;top:544px;width:1px;height:26px;background:#d4d4d4;"></div>
<div class="r" style="left:659.5px;top:544px;width:1px;height:26px;background:#d4d4d4;"></div>
<div class="r" style="left:678.5px;top:544px;width:1px;height:26px;background:#d4d4d4;"></div>
<div class="r" style="left:697.5px;top:544px;width:1px;height:26px;background:#d4d4d4;"></div>
<div class="r" style="left:555px;top:544px;width:86px;height:26px;background:#ffffff;"></div>
<svg class="r" style="left:47px;top:553px;" width="6" height="8" viewBox="0 0 6 8"><rect x="0.5" y="0.5" width="5" height="7" rx="1.5" fill="none" stroke="#888" stroke-width="0.9"/><path d="M0.5 2.5h5" stroke="#888" stroke-width="0.8"/></svg>
<div class="t" style="top:552.00px;font-size:10.5px;color:#777;left:56.70px;">Data Source</div>
<div class="t" style="top:552.00px;font-size:10.5px;color:#777;left:160.00px;">Total Purchases By Supplier Gro...</div>
<div class="t" style="top:552.00px;font-size:10.5px;color:#777;left:335.00px;">Total Purchases By Day</div>
<div class="t" style="top:552.00px;font-size:10.5px;color:#777;left:464.30px;">Purchase Details</div>
<svg class="r" style="left:561px;top:553px;" width="8" height="8" viewBox="0 0 8 8"><rect x="0.5" y="0.5" width="7" height="7" fill="none" stroke="#777" stroke-width="0.8"/><path d="M4 0.5v7M0.5 4h7" stroke="#777" stroke-width="0.8"/></svg>
<div class="t" style="top:552.00px;font-size:10.5px;color:#4a4a4a;font-weight:bold;left:571.30px;">Dashboard 1</div>
<svg class="r" style="left:645px;top:552px;" width="10" height="10" viewBox="0 0 10 10"><rect x="0.5" y="0.5" width="6.5" height="6.5" fill="none" stroke="#777" stroke-width="0.8"/><path d="M2 5.5v-2M3.5 5.5V2.5M5 5.5V4" stroke="#888" stroke-width="0.7"/><path d="M5.5 7.5h4M7.5 5.5v4" stroke="#444" stroke-width="1"/></svg>
<svg class="r" style="left:664px;top:552px;" width="10" height="10" viewBox="0 0 10 10"><rect x="0.5" y="0.5" width="6.5" height="6.5" fill="none" stroke="#777" stroke-width="0.8"/><path d="M3.75 0.5v6.5M0.5 3.75h6.5" stroke="#777" stroke-width="0.7"/><path d="M5.5 7.5h4M7.5 5.5v4" stroke="#444" stroke-width="1"/></svg>
<svg class="r" style="left:683px;top:552px;" width="10" height="10" viewBox="0 0 10 10"><path d="M0.5 0.5l3 1l3-1v6.5l-3 1l-3-1z" fill="none" stroke="#777" stroke-width="0.8"/><path d="M5.5 7.5h4M7.5 5.5v4" stroke="#444" stroke-width="1"/></svg>
<div class="r" style="left:40px;top:570px;width:1120px;height:18px;background:#efefef;"></div>
<div class="r" style="left:40px;top:570px;width:1120px;height:1px;background:#e2e2e2;"></div>
<div class="r" style="left:877.5px;top:571px;width:1px;height:17px;background:#dadada;"></div>
<div class="r" style="left:988px;top:571px;width:1px;height:17px;background:#dadada;"></div>
<div class="r" style="left:1010.5px;top:571px;width:1px;height:17px;background:#dadada;"></div>
<div class="r" style="left:1033px;top:571px;width:1px;height:17px;background:#dadada;"></div>
<div class="r" style="left:1073px;top:571px;width:1px;height:17px;background:#dadada;"></div>
<div class="r" style="left:1116.5px;top:571px;width:1px;height:17px;background:#dadada;"></div>
<svg class="r" style="left:1077px;top:575px;" width="36" height="8" viewBox="0 0 36 8"><path d="M1 1.5v5M5 1.5l-3 2.5l3 2.5z" fill="#bbb" stroke="#bbb" stroke-width="0.6"/><path d="M14 1.5l-3 2.5l3 2.5z" fill="#bbb"/><path d="M20 1.5l3 2.5l-3 2.5z" fill="#bbb"/><path d="M29 1.5l3 2.5l-3 2.5zM33 1.5v5" fill="#bbb" stroke="#bbb" stroke-width="0.6"/></svg>
<svg class="r" style="left:1122px;top:574px;" width="9" height="9" viewBox="0 0 9 9"><rect x="0.3" y="0.3" width="2.2" height="2.2" fill="#aaa"/><rect x="0.3" y="3.3" width="2.2" height="2.2" fill="#aaa"/><rect x="0.3" y="6.3" width="2.2" height="2.2" fill="#aaa"/><rect x="3.3" y="0.3" width="2.2" height="2.2" fill="#aaa"/><rect x="3.3" y="3.3" width="2.2" height="2.2" fill="#aaa"/><rect x="3.3" y="6.3" width="2.2" height="2.2" fill="#aaa"/><rect x="6.3" y="0.3" width="2.2" height="2.2" fill="#aaa"/><rect x="6.3" y="3.3" width="2.2" height="2.2" fill="#aaa"/><rect x="6.3" y="6.3" width="2.2" height="2.2" fill="#aaa"/></svg>
<svg class="r" style="left:1135px;top:574px;" width="9" height="9" viewBox="0 0 9 9"><rect x="0" y="0" width="9" height="6" fill="#999"/><rect x="0" y="7" width="2.2" height="2" fill="#999"/><rect x="3.4" y="7" width="2.2" height="2" fill="#999"/><rect x="6.8" y="7" width="2.2" height="2" fill="#999"/></svg>
<div class="r" style="left:1148px;top:574px;width:9px;height:9px;background:#6a6a6a;"></div>
<div class="r" style="left:40px;top:588px;width:1120px;height:42px;background:#1f2229;"></div>
<svg class="r" style="left:56px;top:597px;" width="24" height="18" viewBox="0 0 24 18"><defs><linearGradient id="cl" x1="0" y1="0" x2="0" y2="1"><stop offset="0" stop-color="#dfe9f8"/><stop offset="1" stop-color="#8fb2e6"/></linearGradient></defs><path d="M4 16.5a3.5 3.5 0 0 1-0.5-7a5.5 5.5 0 0 1 10.5-2a4.5 4.5 0 0 1 7.5 4.5a2.5 2.5 0 0 1-1 4.5z" fill="url(#cl)"/></svg>
<svg class="r" style="left:67px;top:593px;" width="14" height="14" viewBox="0 0 14 14"><circle cx="7" cy="7" r="6.5" fill="#d13438"/><path d="M6 4.5l1.6-1v7.5" stroke="#fff" stroke-width="1.3" fill="none"/></svg>
<div class="t" style="top:597.00px;font-size:10.5px;color:#ffffff;letter-spacing:-0.4px;left:84.70px;">68°F</div>
<div class="t" style="top:610.00px;font-size:10.5px;color:#e6e6e6;left:84.70px;">Cloudy</div>
<svg class="r" style="left:313.5px;top:598.5px;" width="21" height="21" viewBox="0 0 21 21"><defs><linearGradient id="wn" x1="0" y1="0" x2="1" y2="1"><stop offset="0" stop-color="#53c7f7"/><stop offset="1" stop-color="#1a8fe0"/></linearGradient></defs><rect x="0" y="0" width="10" height="10" rx="0.8" fill="url(#wn)"/><rect x="11" y="0" width="10" height="10" rx="0.8" fill="url(#wn)"/><rect x="0" y="11" width="10" height="10" rx="0.8" fill="url(#wn)"/><rect x="11" y="11" width="10" height="10" rx="0.8" fill="url(#wn)"/></svg>
<div class="r" style="left:347.5px;top:596.5px;width:190px;height:25px;background:#efefef;border-radius:13px;"></div>
<svg class="r" style="left:357px;top:602px;" width="13" height="13" viewBox="0 0 13 13"><circle cx="5.5" cy="5.5" r="4.3" fill="none" stroke="#1a1a1a" stroke-width="1.5"/><path d="M8.6 8.6l3.6 3.6" stroke="#1a1a1a" stroke-width="1.6"/></svg>
<div class="t" style="top:604.00px;font-size:11.5px;color:#555;left:378.70px;">Search</div>
<svg class="r" style="left:494px;top:597px;" width="40" height="24" viewBox="0 0 40 24"><ellipse cx="13" cy="20" rx="12" ry="3.5" fill="#e9c99a"/><path d="M4 9l9 2l0 9l-9-2z" fill="#4fa86a"/><path d="M13 11l9-2v9l-9 2z" fill="#67c483"/><path d="M5 9.5l8 1.8v7.5l-8-1.8z" fill="#f4f4f4"/><path d="M15 13l8-8" stroke="#f0a030" stroke-width="2"/><path d="M28 5a4.5 4.5 0 0 1 9 0v14a2 2 0 0 1-2 2h-5a2 2 0 0 1-2-2z" fill="#2a6de8"/><path d="M29.5 12h6" stroke="#7fb2ff" stroke-width="1"/><circle cx="32.5" cy="3" r="1.5" fill="#5c9cff"/></svg>
<svg class="r" style="left:548.5px;top:599px;" width="22" height="20" viewBox="0 0 22 20"><rect x="0" y="6" width="13" height="13" rx="1" fill="#5a5d63"/><rect x="7" y="0" width="14" height="13" rx="1" fill="#f2f2f2"/><rect x="7" y="6" width="6" height="7" fill="#a9abae"/></svg>
<svg class="r" style="left:587px;top:598px;" width="24" height="21" viewBox="0 0 24 21"><path d="M1 3a1.5 1.5 0 0 1 1.5-1.5h6l2 2h11a1.5 1.5 0 0 1 1.5 1.5V18a1.5 1.5 0 0 1-1.5 1.5h-19A1.5 1.5 0 0 1 1 18z" fill="#f5b72b"/><path d="M1 7h22v11a1.5 1.5 0 0 1-1.5 1.5h-19A1.5 1.5 0 0 1 1 18z" fill="#ffd44f"/><rect x="5" y="14" width="8" height="5" fill="#2f7fd6"/></svg>
<div class="r" style="left:597px;top:623px;width:4px;height:2px;background:#9ba0a8;border-radius:1px;"></div>
<svg class="r" style="left:626px;top:598px;" width="22" height="22" viewBox="0 0 22 22"><path d="M11 11L1.91 5.75A10.5 10.5 0 0 1 20.09 5.75z" fill="#db4437"/><path d="M11 11L20.09 5.75A10.5 10.5 0 0 1 11.00 21.50z" fill="#f4c20d"/><path d="M11 11L11.00 21.50A10.5 10.5 0 0 1 1.91 5.75z" fill="#0f9d58"/><circle cx="11" cy="11" r="5.04" fill="#fff"/><circle cx="11" cy="11" r="3.88" fill="#3b7ae8"/></svg>
<svg class="r" style="left:664px;top:598px;" width="22" height="21" viewBox="0 0 22 21"><circle cx="16" cy="5" r="2.8" fill="#7b83eb"/><rect x="12" y="8.5" width="9" height="9" rx="3" fill="#7b83eb"/><circle cx="10" cy="3.8" r="3.3" fill="#5b5fc7"/><rect x="5" y="7.5" width="11" height="11" rx="2" fill="#5b5fc7"/><rect x="0.5" y="6" width="10" height="10" rx="1.2" fill="#4b53bc"/><path d="M3 8.5h5M5.5 8.5v6" stroke="#fff" stroke-width="1.5"/></svg>
<svg class="r" style="left:703px;top:598px;" width="22" height="21" viewBox="0 0 22 21"><rect x="6" y="0.5" width="15.5" height="20" rx="1.5" fill="#2b7cd3"/><rect x="6" y="7" width="15.5" height="7" fill="#185abd"/><rect x="6" y="14" width="15.5" height="6.5" fill="#103f91"/><rect x="0.5" y="5" width="11" height="11" rx="1.2" fill="#185abd"/><path d="M2.2 7.5l1.5 6l1.8-4.5l1.8 4.5l1.5-6" fill="none" stroke="#fff" stroke-width="1.1"/></svg>
<svg class="r" style="left:742px;top:598px;" width="22" height="22" viewBox="0 0 22 22"><path d="M10.5 11L1.41 5.75A10.5 10.5 0 0 1 19.59 5.75z" fill="#db4437"/><path d="M10.5 11L19.59 5.75A10.5 10.5 0 0 1 10.50 21.50z" fill="#f4c20d"/><path d="M10.5 11L10.50 21.50A10.5 10.5 0 0 1 1.41 5.75z" fill="#0f9d58"/><circle cx="10.5" cy="11" r="5.04" fill="#fff"/><circle cx="10.5" cy="11" r="3.88" fill="#3b7ae8"/></svg>
<svg class="r" style="left:753px;top:593px;" width="15" height="15" viewBox="0 0 15 15"><circle cx="7.5" cy="7.5" r="6.8" fill="#1c7f6a"/><circle cx="7.5" cy="7.5" r="5" fill="#e8335a"/></svg>
<div class="r" style="left:750px;top:623.5px;width:5px;height:2px;background:#9ba0a8;border-radius:1px;"></div>
<svg class="r" style="left:780.5px;top:598.5px;" width="20" height="19" viewBox="0 0 20 19"><rect x="0" y="0" width="19.5" height="19" fill="#f7f7f7"/><path d="M6.3999999999999995 9.5h6.6M9.7 6.2v6.6" stroke="#3a7ab5" stroke-width="1.3"/><path d="M2.9999999999999996 5.3h5.2M5.6 2.6999999999999997v5.2" stroke="#3f80ba" stroke-width="1.2"/><path d="M11.200000000000001 5.3h5.2M13.8 2.6999999999999997v5.2" stroke="#3f80ba" stroke-width="1.2"/><path d="M2.9999999999999996 13.7h5.2M5.6 11.1v5.2" stroke="#3f80ba" stroke-width="1.2"/><path d="M11.200000000000001 13.7h5.2M13.8 11.1v5.2" stroke="#3f80ba" stroke-width="1.2"/><path d="M8.5 2.4h2.4M9.7 1.2v2.4" stroke="#5b93c4" stroke-width="0.9"/><path d="M8.5 16.6h2.4M9.7 15.400000000000002v2.4" stroke="#5b93c4" stroke-width="0.9"/><path d="M1.4000000000000001 9.5h2.4M2.6 8.3v2.4" stroke="#5b93c4" stroke-width="0.9"/><path d="M15.600000000000001 9.5h2.4M16.8 8.3v2.4" stroke="#8fb5d8" stroke-width="0.9"/></svg>
<div class="r" style="left:788px;top:623.5px;width:5px;height:2px;background:#9ba0a8;border-radius:1px;"></div>
<svg class="r" style="left:869.5px;top:605px;" width="11" height="7" viewBox="0 0 11 7"><path d="M1 6l4.5-4.5L10 6" fill="none" stroke="#fff" stroke-width="1.2"/></svg>
<svg class="r" style="left:895px;top:603px;" width="16" height="11" viewBox="0 0 16 11"><path d="M3.5 10a3 3 0 0 1-0.3-6a4 4 0 0 1 7.3-1.2a3.3 3.3 0 0 1 4.5 3.2a2 2 0 0 1-0.5 4z" fill="#e8e8e8"/></svg>
<div class="t" style="top:598.00px;font-size:9.5px;color:#ffffff;left:925.70px;">ENG</div>
<div class="t" style="top:612.00px;font-size:9.5px;color:#ffffff;left:929.60px;">US</div>
<svg class="r" style="left:962px;top:603px;" width="15" height="12" viewBox="0 0 15 12"><path d="M1 4.5a9 9 0 0 1 13 0M3 6.8a6 6 0 0 1 9 0M5 9a3 3 0 0 1 5 0" fill="none" stroke="#fff" stroke-width="1.1"/><circle cx="7.5" cy="10.8" r="1" fill="#fff"/></svg>
<svg class="r" style="left:983px;top:603px;" width="15" height="12" viewBox="0 0 15 12"><path d="M1 4h2.5L7 1v10L3.5 8H1z" fill="none" stroke="#fff" stroke-width="1"/><path d="M9.5 4l4 4M13.5 4l-4 4" stroke="#fff" stroke-width="1"/></svg>
<svg class="r" style="left:1004px;top:604px;" width="15" height="9" viewBox="0 0 15 9"><rect x="0.5" y="0.5" width="12" height="8" rx="1.5" fill="none" stroke="#fff" stroke-width="1"/><rect x="2" y="2" width="7" height="5" fill="#fff"/><rect x="13" y="3" width="1.5" height="3" fill="#fff"/></svg>
<div class="t" style="top:598.00px;font-size:10px;color:#ffffff;right:113.60px;text-align:right;">9:00 PM</div>
<div class="t" style="top:611.00px;font-size:10.5px;color:#ffffff;right:113.60px;text-align:right;">23/04/2024</div>
<svg class="r" style="left:1094px;top:602px;" width="14" height="15" viewBox="0 0 14 15"><path d="M2 11.5V7a5 5 0 0 1 10 0v4.5l1.3 1.3H0.7z" fill="none" stroke="#fff" stroke-width="1.1" stroke-linejoin="round"/><path d="M5.5 13.5a1.5 1.5 0 0 0 3 0" fill="none" stroke="#fff" stroke-width="1"/></svg>
<svg class="r" style="left:1121px;top:598px;" width="24" height="22" viewBox="0 0 24 22"><defs><linearGradient id="cp" x1="0" y1="0" x2="1" y2="1"><stop offset="0" stop-color="#3fb7f0"/><stop offset="0.5" stop-color="#7bd66a"/><stop offset="1" stop-color="#e05cc8"/></linearGradient></defs><path d="M5 2h8a3 3 0 0 1 3 2.5l2 9a3 3 0 0 1-3 3.5H3a3 3 0 0 1-3-3.5l2-9A3 3 0 0 1 5 2z" fill="url(#cp)"/><path d="M8 6l2 8" stroke="#1f2229" stroke-width="1.5"/><rect x="8" y="14" width="15" height="7" rx="2" fill="#f7c600"/><text x="15.5" y="20" font-size="6" font-family="Liberation Sans" font-weight="bold" text-anchor="middle" fill="#1f2229">PRE</text></svg>
</body></html>
